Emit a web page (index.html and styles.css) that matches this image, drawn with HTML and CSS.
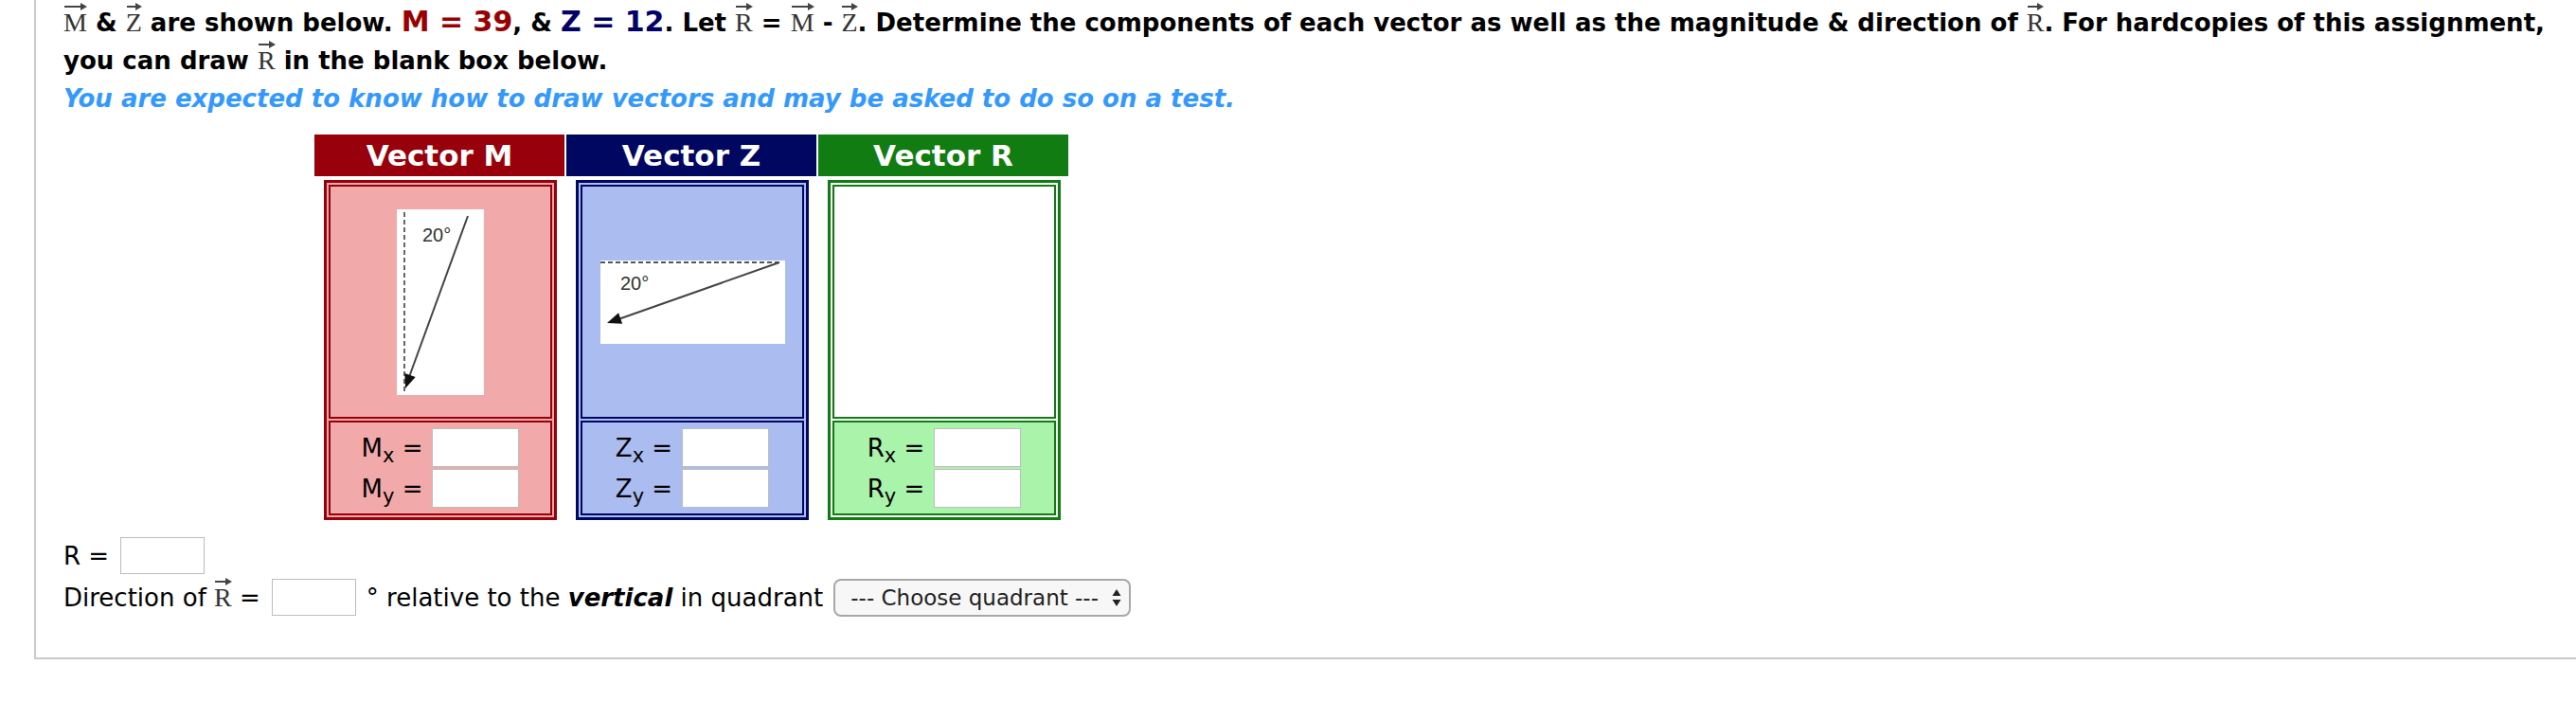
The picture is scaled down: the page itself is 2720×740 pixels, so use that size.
FILE: index.html
```html
<!DOCTYPE html>
<html>
<head>
<meta charset="utf-8">
<link rel="stylesheet" href="styles.css">
</head>
<body>
<div class="page">
  <p class="intro"><span class="vec">M</span> &amp; <span class="vec">Z</span> are shown below. <span class="val val-m">M = 39</span>, &amp; <span class="val val-z">Z = 12</span>. Let <span class="vec">R</span> = <span class="vec">M</span> - <span class="vec">Z</span>. Determine the components of each vector as well as the magnitude &amp; direction of <span class="vec">R</span>. For hardcopies of this assignment,<br>you can draw <span class="vec">R</span> in the blank box below.</p>
  <p class="note">You are expected to know how to draw vectors and may be asked to do so on a test.</p>

  <div class="vectors">
    <div class="head head-m">Vector M</div>
    <div class="head head-z">Vector Z</div>
    <div class="head head-r">Vector R</div>

    <div class="box box-m">
      <div class="cell cell-draw">
        <svg class="pic" width="92" height="196" viewBox="0 0 92 196">
          <rect width="92" height="196" fill="#fff"/>
          <line x1="8" y1="3" x2="8" y2="194" stroke="#666" stroke-width="2" stroke-dasharray="5 3"/>
          <line x1="75" y1="7" x2="13" y2="177" stroke="#444" stroke-width="2"/>
          <polygon points="9,189 19.7,176.9 8.3,172.9" fill="#111"/>
          <text x="27" y="34" font-family="Liberation Sans, Arial, sans-serif" font-size="20" fill="#333">20°</text>
        </svg>
      </div>
      <div class="cell cell-comp">
        <div class="comp-grid">
          <span class="lbl">M<sub>x</sub> =</span><input type="text">
          <span class="lbl">M<sub>y</sub> =</span><input type="text">
        </div>
      </div>
    </div>

    <div class="box box-z">
      <div class="cell cell-draw">
        <svg class="pic" width="195" height="88" viewBox="0 0 195 88">
          <rect width="195" height="88" fill="#fff"/>
          <line x1="0" y1="2" x2="192" y2="2" stroke="#555" stroke-width="2" stroke-dasharray="5 3"/>
          <line x1="189" y1="2" x2="19" y2="62" stroke="#444" stroke-width="2"/>
          <polygon points="7,66 23.1,66.7 19.1,55.3" fill="#111"/>
          <text x="21" y="31" font-family="Liberation Sans, Arial, sans-serif" font-size="20" fill="#333">20°</text>
        </svg>
      </div>
      <div class="cell cell-comp">
        <div class="comp-grid">
          <span class="lbl">Z<sub>x</sub> =</span><input type="text">
          <span class="lbl">Z<sub>y</sub> =</span><input type="text">
        </div>
      </div>
    </div>

    <div class="box box-r">
      <div class="cell cell-draw"></div>
      <div class="cell cell-comp">
        <div class="comp-grid">
          <span class="lbl">R<sub>x</sub> =</span><input type="text">
          <span class="lbl">R<sub>y</sub> =</span><input type="text">
        </div>
      </div>
    </div>
  </div>

  <div class="answer">
    <div class="row"><span>R =</span><input class="inp-sm" type="text"></div>
    <div class="row">
      <span>Direction of <span class="vec">R</span> =</span>
      <input class="inp-sm" type="text">
      <span>° relative to the <b><i>vertical</i></b> in quadrant</span>
      <span class="select-wrap">
        <select class="quad"><option>--- Choose quadrant ---</option></select>
        <svg class="select-arrows" width="10" height="20" viewBox="0 0 10 20">
          <polygon points="5,1 9.5,8 0.5,8" fill="#222"/>
          <polygon points="5,19 9.5,12 0.5,12" fill="#222"/>
        </svg>
      </span>
    </div>
  </div>
</div>
</body>
</html>
```

FILE: styles.css
```css
body {
  margin: 0;
  font-family: "DejaVu Sans", Verdana, sans-serif;
  color: #000;
  background: #fff;
}

.page {
  margin-left: 36px;
  border-left: 2px solid #cacaca;
  border-bottom: 2px solid #cacaca;
  padding: 3px 0 44px 29px;
}

.intro {
  margin: 0;
  font-size: 26px;
  font-weight: bold;
  line-height: 40px;
}

.note {
  margin: 0;
  font-size: 26px;
  font-weight: bold;
  font-style: italic;
  line-height: 40px;
  color: #3399ff;
}

.val {
  font-size: 30px;
}

.val-m {
  color: #990000;
}

.val-z {
  color: #000066;
}

.vec {
  position: relative;
  display: inline-block;
  font-family: "Liberation Serif", "Times New Roman", serif;
  font-weight: normal;
  font-style: normal;
  font-size: 28px;
  line-height: 1;
  color: #333;
}

.vec::before {
  content: "";
  position: absolute;
  left: 1px;
  right: 3px;
  top: -4px;
  height: 2px;
  background: #444;
}

.vec::after {
  content: "";
  position: absolute;
  right: 0;
  top: -7px;
  width: 0;
  height: 0;
  border-left: 7px solid #444;
  border-top: 4px solid transparent;
  border-bottom: 4px solid transparent;
}

.vectors {
  display: grid;
  grid-template-columns: repeat(3, 264px);
  column-gap: 2px;
  row-gap: 4px;
  margin: 18px 0 0 265px;
}

.head {
  height: 44px;
  display: flex;
  align-items: center;
  justify-content: center;
  color: #fff;
  font-weight: bold;
  font-size: 31px;
}

.head-m { background: #98000b; }
.head-z { background: #000760; }
.head-r { background: #107c12; }

.box {
  width: 246px;
  margin-left: 10px;
  box-sizing: border-box;
  border: 3px solid;
  padding: 2px;
  display: flex;
  flex-direction: column;
  gap: 2px;
}

.cell {
  border: 2px solid;
  box-sizing: border-box;
  display: flex;
  align-items: center;
  justify-content: center;
}

.cell-draw {
  height: 247px;
}

.cell-comp {
  height: 100px;
}

.pic {
  display: block;
}

.box-m { border-color: #98000b; background: #f2a9a9; }
.box-m .cell { border-color: #98000b; }

.box-z { border-color: #000760; background: #abbcf0; }
.box-z .cell { border-color: #000760; }

.box-r { border-color: #107c12; background: #fff; }
.box-r .cell { border-color: #107c12; }
.box-r .cell-comp { background: #aaf3aa; }

.comp-grid {
  display: grid;
  grid-template-columns: auto 92px;
  column-gap: 10px;
  row-gap: 2px;
  align-items: center;
  font-size: 26px;
}

.comp-grid input {
  width: 92px;
  height: 41px;
  box-sizing: border-box;
  border: 1px solid #bdbdbd;
  margin: 0;
  padding: 0;
  background: #fff;
}

.lbl sub {
  font-size: 21px;
  vertical-align: -6px;
  line-height: 0;
}

.answer {
  margin-top: 18px;
  font-size: 26px;
  display: flex;
  flex-direction: column;
  gap: 5px;
}

.row {
  display: flex;
  align-items: center;
  gap: 11px;
  height: 39px;
}

.row > * {
  flex-shrink: 0;
}

.inp-sm {
  width: 89px;
  height: 39px;
  box-sizing: border-box;
  border: 1px solid #bdbdbd;
  margin: 0 0 0 1px;
  padding: 0;
  background: #fff;
}

.select-wrap {
  position: relative;
  display: inline-block;
  height: 40px;
}

.quad {
  appearance: none;
  -webkit-appearance: none;
  width: 314px;
  height: 40px;
  box-sizing: border-box;
  border: 2px solid #a8a8a8;
  border-radius: 8px;
  background: #f7f7f7;
  padding: 0 0 0 16px;
  margin: 0;
  font-family: "DejaVu Sans", Verdana, sans-serif;
  font-size: 23px;
  color: #222;
}

.select-arrows {
  position: absolute;
  right: 10px;
  top: 10px;
}
```
